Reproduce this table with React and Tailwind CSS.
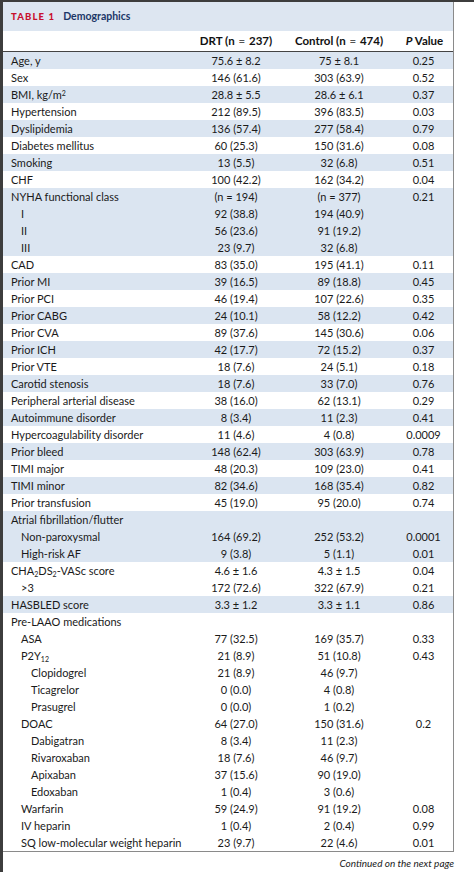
import React from 'react'

const rows = [
  { label: 'Age, y', drt: '75.6 ± 8.2', ctl: '75 ± 8.1', p: '0.25', shade: true },
  { label: 'Sex', drt: '146 (61.6)', ctl: '303 (63.9)', p: '0.52' },
  { label: <>BMI, kg/m<sup className="text-[7px]">2</sup></>, drt: '28.8 ± 5.5', ctl: '28.6 ± 6.1', p: '0.37', shade: true },
  { label: 'Hypertension', drt: '212 (89.5)', ctl: '396 (83.5)', p: '0.03' },
  { label: 'Dyslipidemia', drt: '136 (57.4)', ctl: '277 (58.4)', p: '0.79', shade: true },
  { label: 'Diabetes mellitus', drt: '60 (25.3)', ctl: '150 (31.6)', p: '0.08' },
  { label: 'Smoking', drt: '13 (5.5)', ctl: '32 (6.8)', p: '0.51', shade: true },
  { label: 'CHF', drt: '100 (42.2)', ctl: '162 (34.2)', p: '0.04' },
  { label: 'NYHA functional class', drt: '(n = 194)', ctl: '(n = 377)', p: '0.21', shade: true },
  { label: 'I', drt: '92 (38.8)', ctl: '194 (40.9)', indent: 1, shade: true },
  { label: 'II', drt: '56 (23.6)', ctl: '91 (19.2)', indent: 1, shade: true },
  { label: 'III', drt: '23 (9.7)', ctl: '32 (6.8)', indent: 1, shade: true },
  { label: 'CAD', drt: '83 (35.0)', ctl: '195 (41.1)', p: '0.11' },
  { label: 'Prior MI', drt: '39 (16.5)', ctl: '89 (18.8)', p: '0.45', shade: true },
  { label: 'Prior PCI', drt: '46 (19.4)', ctl: '107 (22.6)', p: '0.35' },
  { label: 'Prior CABG', drt: '24 (10.1)', ctl: '58 (12.2)', p: '0.42', shade: true },
  { label: 'Prior CVA', drt: '89 (37.6)', ctl: '145 (30.6)', p: '0.06' },
  { label: 'Prior ICH', drt: '42 (17.7)', ctl: '72 (15.2)', p: '0.37', shade: true },
  { label: 'Prior VTE', drt: '18 (7.6)', ctl: '24 (5.1)', p: '0.18' },
  { label: 'Carotid stenosis', drt: '18 (7.6)', ctl: '33 (7.0)', p: '0.76', shade: true },
  { label: 'Peripheral arterial disease', drt: '38 (16.0)', ctl: '62 (13.1)', p: '0.29' },
  { label: 'Autoimmune disorder', drt: '8 (3.4)', ctl: '11 (2.3)', p: '0.41', shade: true },
  { label: 'Hypercoagulability disorder', drt: '11 (4.6)', ctl: '4 (0.8)', p: '0.0009' },
  { label: 'Prior bleed', drt: '148 (62.4)', ctl: '303 (63.9)', p: '0.78', shade: true },
  { label: 'TIMI major', drt: '48 (20.3)', ctl: '109 (23.0)', p: '0.41' },
  { label: 'TIMI minor', drt: '82 (34.6)', ctl: '168 (35.4)', p: '0.82', shade: true },
  { label: 'Prior transfusion', drt: '45 (19.0)', ctl: '95 (20.0)', p: '0.74' },
  { label: 'Atrial fibrillation/flutter', shade: true },
  { label: 'Non-paroxysmal', drt: '164 (69.2)', ctl: '252 (53.2)', p: '0.0001', indent: 1, shade: true },
  { label: 'High-risk AF', drt: '9 (3.8)', ctl: '5 (1.1)', p: '0.01', indent: 1, shade: true },
  { label: <>CHA<sub className="text-[7px]">2</sub>DS<sub className="text-[7px]">2</sub>-VASc score</>, drt: '4.6 ± 1.6', ctl: '4.3 ± 1.5', p: '0.04' },
  { label: '>3', drt: '172 (72.6)', ctl: '322 (67.9)', p: '0.21', indent: 1 },
  { label: 'HASBLED score', drt: '3.3 ± 1.2', ctl: '3.3 ± 1.1', p: '0.86', shade: true },
  { label: 'Pre-LAAO medications' },
  { label: 'ASA', drt: '77 (32.5)', ctl: '169 (35.7)', p: '0.33', indent: 1 },
  { label: <>P2Y<sub className="text-[7px]">12</sub></>, drt: '21 (8.9)', ctl: '51 (10.8)', p: '0.43', indent: 1 },
  { label: 'Clopidogrel', drt: '21 (8.9)', ctl: '46 (9.7)', indent: 2 },
  { label: 'Ticagrelor', drt: '0 (0.0)', ctl: '4 (0.8)', indent: 2 },
  { label: 'Prasugrel', drt: '0 (0.0)', ctl: '1 (0.2)', indent: 2 },
  { label: 'DOAC', drt: '64 (27.0)', ctl: '150 (31.6)', p: '0.2', indent: 1 },
  { label: 'Dabigatran', drt: '8 (3.4)', ctl: '11 (2.3)', indent: 2 },
  { label: 'Rivaroxaban', drt: '18 (7.6)', ctl: '46 (9.7)', indent: 2 },
  { label: 'Apixaban', drt: '37 (15.6)', ctl: '90 (19.0)', indent: 2 },
  { label: 'Edoxaban', drt: '1 (0.4)', ctl: '3 (0.6)', indent: 2 },
  { label: 'Warfarin', drt: '59 (24.9)', ctl: '91 (19.2)', p: '0.08', indent: 1 },
  { label: 'IV heparin', drt: '1 (0.4)', ctl: '2 (0.4)', p: '0.99', indent: 1 },
  { label: 'SQ low-molecular weight heparin', drt: '23 (9.7)', ctl: '22 (4.6)', p: '0.01', indent: 1 },
]

function Row({ r }) {
  const pad = r.indent === 2 ? 'pl-[28px]' : r.indent === 1 ? 'pl-[18px]' : 'pl-[8px]'
  return (
    <div className={'grid grid-cols-[187px_92px_114px_1fr] h-[17px] items-center ' + (r.shade ? 'bg-[#dbe5f1]' : 'bg-white')}>
      <div className={pad + ' whitespace-nowrap'}>{r.label}</div>
      <div className="text-center">{r.drt}</div>
      <div className="text-center">{r.ctl}</div>
      <div className="text-center pr-[2px]">{r.p}</div>
    </div>
  )
}

export default function App() {
  return (
    <div className="w-[474px] h-[872px] bg-white overflow-hidden border-t-2 border-l-[3px] border-[#3d3d3d] text-[11px] leading-none text-[#1a1a1a]"
         style={{ fontFamily: 'Lato, "Liberation Sans", sans-serif' }}>
      <div className="w-[451px] border-r border-b border-[#8a8a8a]">
        <div className="h-[29px] bg-[#dde6f1] flex items-center pl-[8px] gap-[8px]">
          <span className="text-[9.5px] font-black tracking-[0.12em] text-[#c8102e]">TABLE 1</span>
          <span className="text-[10.5px] font-bold text-[#1c3767]">Demographics</span>
        </div>
        <div className="grid grid-cols-[187px_92px_114px_1fr] h-[21px] items-center border-b-[1.5px] border-[#444] font-bold text-[11.5px] text-[#111]">
          <div />
          <div className="text-center">DRT (n <span className="font-normal text-[#555] px-[1px]">=</span> 237)</div>
          <div className="text-center">Control (n <span className="font-normal text-[#555] px-[1px]">=</span> 474)</div>
          <div className="text-center"><i>P</i> Value</div>
        </div>
        {rows.map((r, i) => <Row key={i} r={r} />)}
      </div>
      <div className="w-[451px] text-right italic text-[10px] mt-[6px]">Continued on the next page</div>
    </div>
  )
}
